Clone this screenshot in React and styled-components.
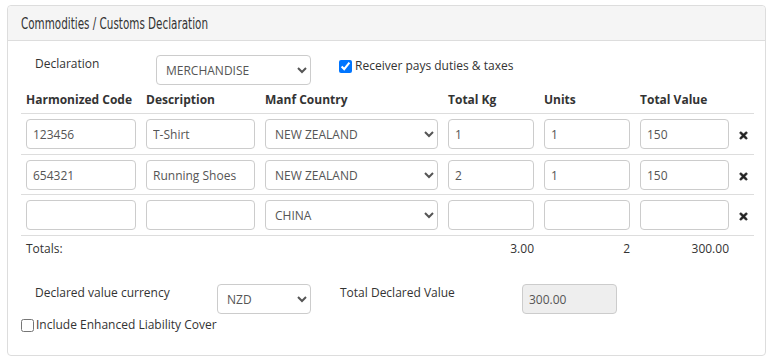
import React from "react";
import styled, { createGlobalStyle } from "styled-components";
import { FaTimes } from "react-icons/fa";

const GlobalStyle = createGlobalStyle`
  html, body { margin: 0; padding: 0; background: #fff; }
  body { font-family: "Open Sans", "Liberation Sans", sans-serif; font-size: 12px; color: #333; }
  * { box-sizing: border-box; }
`;

const COLS = "120px 119px 183px 96px 96px 99px 19px";

const Page = styled.div`
  padding: 5px 0 0 7px;
`;

const Panel = styled.section`
  width: 759px;
  border: 1px solid #ddd;
  border-radius: 4px;
  background: #fff;
`;

const PanelHeading = styled.header`
  height: 35px;
  background: #f5f5f5;
  border-bottom: 1px solid #ddd;
  border-radius: 4px 4px 0 0;
  display: flex;
  align-items: center;
  padding-left: 13px;
`;

const Title = styled.h3`
  margin: 0;
  font-family: "DejaVu Sans Condensed", "DejaVu Sans", sans-serif;
  font-stretch: condensed;
  font-weight: 400;
  font-size: 15px;
  line-height: 18px;
  color: #333;
  white-space: nowrap;
  transform: scaleX(0.77);
  transform-origin: left center;
  margin-top: 1px;
`;

const PanelBody = styled.div`
  padding: 14px 11px 21px 13px;
`;

const FormRow = styled.div`
  display: flex;
  align-items: flex-start;
  padding-left: ${(p) => p.$indent || 0}px;
  margin-top: ${(p) => p.$top || 0}px;
`;

const FieldLabel = styled.label`
  width: ${(p) => p.$width}px;
  margin-left: ${(p) => p.$offset || 0}px;
  line-height: 18px;
  font-size: 12px;
  color: #333;
`;

const Select = styled.select`
  width: ${(p) => (p.$width ? `${p.$width}px` : "100%")};
  height: 30px;
  border: 1px solid #ccc;
  border-radius: 4px;
  background: #fff;
  color: #555;
  font-family: "Open Sans", sans-serif;
  font-size: 12px;
  padding: 0 5px;
  margin: 0;
`;

const Input = styled.input`
  width: ${(p) => (p.$width ? `${p.$width}px` : "100%")};
  height: 30px;
  border: 1px solid #ccc;
  border-radius: 4px;
  background: ${(p) => (p.disabled ? "#eee" : "#fff")};
  color: #555;
  font-family: "Open Sans", sans-serif;
  font-size: 12px;
  padding: 0 6px;
  margin: 0;
  opacity: 1;
  -webkit-text-fill-color: #555;
`;

const CheckLabel = styled.label`
  display: flex;
  align-items: center;
  gap: ${(p) => p.$gap || 3}px;
  margin-left: ${(p) => p.$offset || 0}px;
  margin-top: ${(p) => p.$top || 0}px;
  line-height: 18px;
  font-size: 12px;
  color: #333;
  input {
    margin: 0;
    width: 13px;
    height: 13px;
  }
`;

const Grid = styled.div`
  margin-top: 0;
`;

const HeadRow = styled.div`
  display: grid;
  grid-template-columns: ${COLS};
  height: 28px;
  align-items: end;
  padding-bottom: 4px;
`;

const HeadCell = styled.div`
  padding: 0 5px;
  font-weight: 700;
  font-size: 12px;
  line-height: 18px;
  color: #333;
  white-space: nowrap;
`;

const DataRow = styled.div`
  display: grid;
  grid-template-columns: ${COLS};
  align-items: center;
  border-top: 1px solid #ddd;
  padding: 5px 0 ${(p) => p.$bottom ?? 5}px;
`;

const Cell = styled.div`
  padding: 0 5px;
  text-align: ${(p) => (p.$right ? "right" : "left")};
`;

const RemoveCell = styled.div`
  display: flex;
  justify-content: center;
  align-items: center;
  color: #222;
  font-size: 11px;
  padding-top: 2px;
  svg {
    stroke: #222;
    stroke-width: 30px;
  }
`;

const TotalsRow = styled.div`
  display: grid;
  grid-template-columns: ${COLS};
  border-top: 1px solid #ddd;
  padding-top: 4px;
  line-height: 18px;
  font-size: 12px;
  color: #333;
`;

const rows = [
  { code: "123456", desc: "T-Shirt", country: "NEW ZEALAND", kg: "1", units: "1", value: "150" },
  { code: "654321", desc: "Running Shoes", country: "NEW ZEALAND", kg: "2", units: "1", value: "150" },
  { code: "", desc: "", country: "CHINA", kg: "", units: "", value: "" },
];

const countries = ["NEW ZEALAND", "AUSTRALIA", "CHINA", "UNITED STATES"];

export default function App() {
  return (
    <>
      <GlobalStyle />
      <Page>
        <Panel>
          <PanelHeading>
            <Title>Commodities / Customs Declaration</Title>
          </PanelHeading>
          <PanelBody>
            <FormRow $indent={14}>
              <FieldLabel $width={121}>Declaration</FieldLabel>
              <Select $width={155} defaultValue="MERCHANDISE">
                <option>MERCHANDISE</option>
                <option>GIFT</option>
                <option>SAMPLE</option>
                <option>DOCUMENTS</option>
              </Select>
              <CheckLabel $offset={28} $top={2}>
                <input type="checkbox" defaultChecked />
                Receiver pays duties &amp; taxes
              </CheckLabel>
            </FormRow>

            <Grid>
              <HeadRow>
                <HeadCell>Harmonized Code</HeadCell>
                <HeadCell>Description</HeadCell>
                <HeadCell>Manf Country</HeadCell>
                <HeadCell>Total Kg</HeadCell>
                <HeadCell>Units</HeadCell>
                <HeadCell>Total Value</HeadCell>
                <HeadCell />
              </HeadRow>
              {rows.map((r, i) => (
                <DataRow key={i} $bottom={i === 1 ? 4 : 5}>
                  <Cell><Input defaultValue={r.code} /></Cell>
                  <Cell><Input defaultValue={r.desc} /></Cell>
                  <Cell>
                    <Select defaultValue={r.country}>
                      {countries.map((c) => (
                        <option key={c}>{c}</option>
                      ))}
                    </Select>
                  </Cell>
                  <Cell><Input defaultValue={r.kg} /></Cell>
                  <Cell><Input defaultValue={r.units} /></Cell>
                  <Cell><Input defaultValue={r.value} /></Cell>
                  <RemoveCell><FaTimes /></RemoveCell>
                </DataRow>
              ))}
              <TotalsRow>
                <Cell>Totals:</Cell>
                <Cell />
                <Cell />
                <Cell $right>3.00</Cell>
                <Cell $right>2</Cell>
                <Cell $right>300.00</Cell>
                <Cell />
              </TotalsRow>
            </Grid>

            <FormRow $indent={14} $top={26}>
              <FieldLabel $width={182}>Declared value currency</FieldLabel>
              <Select $width={94} defaultValue="NZD">
                <option>NZD</option>
                <option>AUD</option>
                <option>USD</option>
              </Select>
              <FieldLabel $width={182} $offset={29}>Total Declared Value</FieldLabel>
              <Input $width={95} disabled defaultValue="300.00" />
            </FormRow>

            <CheckLabel $gap={2} $top={2}>
              <input type="checkbox" />
              Include Enhanced Liability Cover
            </CheckLabel>
          </PanelBody>
        </Panel>
      </Page>
    </>
  );
}
